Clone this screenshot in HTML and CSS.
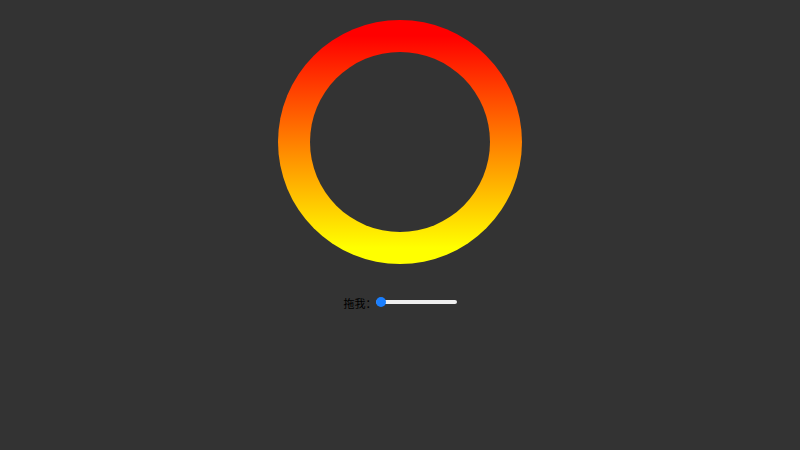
FILE: index.html
```html
<!DOCTYPE html>
<html lang="zh">
<head>
<meta charset="utf-8">
<link rel="stylesheet" href="styles.css">
</head>
<body>
<div class="page">
  <div class="ring"><div class="hole"></div></div>
  <label class="control"><span class="label">拖我：</span><input class="slider" type="range" min="0" max="100" value="0"></label>
</div>
</body>
</html>
```
FILE: styles.css
```css
html, body {
  margin: 0;
  padding: 0;
  background: #333333;
  height: 100%;
}
.page {
  display: flex;
  flex-direction: column;
  align-items: center;
  padding-top: 20px;
}
.ring {
  width: 244px;
  height: 244px;
  border-radius: 50%;
  background: linear-gradient(to bottom, #ff0000 16px, #ffff00 228px);
  display: flex;
  align-items: center;
  justify-content: center;
}
.hole {
  width: 180px;
  height: 180px;
  border-radius: 50%;
  background: #333333;
}
.control {
  margin-top: 30px;
  display: flex;
  align-items: center;
  height: 16px;
  font-family: "Noto Sans CJK SC", sans-serif;
  font-size: 11px;
  color: #000;
}
.label {
  line-height: 16px;
  padding-top: 2px;
}
.slider {
  -webkit-appearance: none;
  appearance: none;
  width: 81px;
  height: 16px;
  margin: 0 0 0 -1px;
  padding: 0;
  background: transparent;
}
.slider::-webkit-slider-runnable-track {
  height: 4px;
  border-radius: 2px;
  background: #efefef;
}
.slider::-webkit-slider-thumb {
  -webkit-appearance: none;
  appearance: none;
  width: 10px;
  height: 10px;
  margin-top: -3px;
  border-radius: 50%;
  background: #1a7fff;
  border: none;
}
```
